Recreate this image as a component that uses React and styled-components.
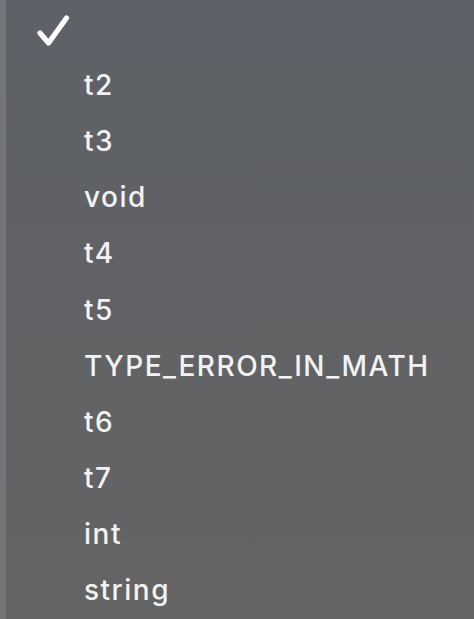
import React from "react";
import styled, { createGlobalStyle } from "styled-components";

const Global = createGlobalStyle`
  html, body { margin: 0; padding: 0; background: #626365; }
  body { width: 474px; height: 619px; overflow: hidden; }
`;

const Menu = styled.div`
  box-sizing: border-box;
  width: 474px;
  height: 619px;
  padding-top: 1px;
  background: linear-gradient(180deg, #5e6167 0%, #606265 40%, #646464 100%);
  border-left: 6px solid #737477;
  display: flex;
  flex-direction: column;
  font-family: Inter, "Liberation Sans", sans-serif;
`;

const Row = styled.div`
  height: 56.1px;
  flex: none;
  display: flex;
  align-items: center;
`;

const CheckCell = styled.div`
  width: 78px;
  flex: none;
  display: flex;
  justify-content: flex-end;
  padding-right: 12px;
  box-sizing: border-box;
  align-self: stretch;
  align-items: center;
`;

const Label = styled.span`
  color: #f2f2f2;
  font-size: 28px;
  font-weight: 500;
  letter-spacing: 1.5px;
  line-height: 1;
`;

const CheckMark = () => (
  <svg width="36" height="36" viewBox="0 0 36 36" style={{ marginTop: 6 }}>
    <path
      d="M4 19 L12.5 29 L30.5 4"
      fill="none"
      stroke="#ffffff"
      strokeWidth="5.2"
      strokeLinecap="round"
      strokeLinejoin="round"
    />
  </svg>
);

const items = ["", "t2", "t3", "void", "t4", "t5", "TYPE_ERROR_IN_MATH", "t6", "t7", "int", "string"];

export default function App() {
  return (
    <>
      <Global />
      <Menu>
        {items.map((t, i) => (
          <Row key={i}>
            <CheckCell>{i === 0 ? <CheckMark /> : null}</CheckCell>
            <Label>{t}</Label>
          </Row>
        ))}
      </Menu>
    </>
  );
}
